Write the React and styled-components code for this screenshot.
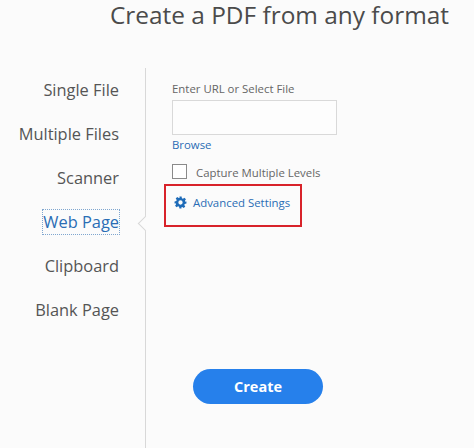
import React from 'react';
import styled, { createGlobalStyle } from 'styled-components';

const GlobalStyle = createGlobalStyle`
  html, body {
    margin: 0;
    padding: 0;
    background: #fbfbfb;
  }
`;

const tabs = ['Single File', 'Multiple Files', 'Scanner', 'Web Page', 'Clipboard', 'Blank Page'];

export default function App() {
  return (
    <Page>
      <GlobalStyle />
      <Title>Create a PDF from any format</Title>
      <Body>
        <Sidebar>
          {tabs.map((tab) => (
            <Tab key={tab}>
              <TabLabel $active={tab === 'Web Page'}>{tab}</TabLabel>
            </Tab>
          ))}
          <Notch />
        </Sidebar>
        <Panel>
          <Label>Enter URL or Select File</Label>
          <UrlInput />
          <Browse>Browse</Browse>
          <CheckRow>
            <Checkbox />
            <CheckLabel>Capture Multiple Levels</CheckLabel>
          </CheckRow>
          <Settings>
            <Gear viewBox="0 0 24 24">
              <path
                fillRule="evenodd"
                d="M10 1h4l.6 3.2 1.9.8 2.7-1.8 2.8 2.8-1.8 2.7.8 1.9L23 10v4l-3.2.6-.8 1.9 1.8 2.7-2.8 2.8-2.7-1.8-1.9.8L14 23h-4l-.6-3.2-1.9-.8-2.7 1.8-2.8-2.8 1.8-2.7-.8-1.9L1 14v-4l3.2-.6.8-1.9-1.8-2.7 2.8-2.8 2.7 1.8 1.9-.8zM12 8a4 4 0 1 0 0 8 4 4 0 0 0 0-8z"
              />
            </Gear>
            <span>Advanced Settings</span>
          </Settings>
          <CreateButton>Create</CreateButton>
        </Panel>
      </Body>
    </Page>
  );
}

const Page = styled.div`
  width: 474px;
  height: 448px;
  overflow: hidden;
  background: #fbfbfb;
  font-family: 'Open Sans', 'Noto Sans', sans-serif;
`;

const Title = styled.h1`
  box-sizing: border-box;
  margin: 0;
  padding: 0 0 0 110px;
  height: 68px;
  font-size: 24.4px;
  line-height: 29px;
  font-weight: 400;
  color: #4b4b4b;
  white-space: nowrap;
`;

const Body = styled.div`
  display: flex;
  height: 380px;
`;

const Sidebar = styled.nav`
  position: relative;
  width: 146px;
  box-sizing: border-box;
  padding: 0 26px 0 0;
  border-right: 1px solid #d8d8d8;
`;

const Tab = styled.div`
  display: flex;
  justify-content: flex-end;
  align-items: center;
  height: 44px;
`;

const TabLabel = styled.span`
  font-size: 16.4px;
  line-height: 24px;
  color: ${(props) => (props.$active ? '#2a6db5' : '#555')};
  outline: ${(props) => (props.$active ? '1px dotted #7fa6cf' : 'none')};
`;

const Notch = styled.div`
  position: absolute;
  top: 150px;
  right: -6px;
  width: 10px;
  height: 10px;
  background: #fbfbfb;
  border-left: 1px solid #d8d8d8;
  border-bottom: 1px solid #d8d8d8;
  transform: rotate(45deg);
`;

const Panel = styled.section`
  flex: 1;
  padding: 11px 0 0 26px;
  font-size: 11.4px;
  color: #666;
`;

const Label = styled.div`
  line-height: 20px;
`;

const UrlInput = styled.div`
  width: 163px;
  height: 33px;
  margin-top: 1px;
  border: 1px solid #d9d9d9;
  background: #fdfdfd;
`;

const Browse = styled.div`
  line-height: 20px;
  color: #2a6db5;
`;

const CheckRow = styled.div`
  display: flex;
  align-items: center;
  gap: 9px;
  margin-top: 8px;
`;

const CheckLabel = styled.span`
  padding-top: 2px;
`;

const Checkbox = styled.div`
  width: 13px;
  height: 13px;
  border: 1px solid #8a8a8a;
  background: #fff;
`;

const Settings = styled.div`
  display: flex;
  align-items: center;
  gap: 6px;
  width: 138px;
  height: 43px;
  margin: 4px 0 0 -8px;
  padding: 0 0 6px 8px;
  box-sizing: border-box;
  border: 2px solid #d8232a;
  color: #2a6db5;
  white-space: nowrap;
`;

const Gear = styled.svg`
  width: 13px;
  height: 13px;
  fill: #1e6bb8;
  flex-shrink: 0;
`;

const CreateButton = styled.button`
  display: block;
  width: 130px;
  height: 35px;
  margin: 142px 0 0 21px;
  padding: 0;
  border: none;
  border-radius: 18px;
  background: #2680eb;
  color: #fff;
  font-family: inherit;
  font-size: 14.5px;
  font-weight: 700;
`;
